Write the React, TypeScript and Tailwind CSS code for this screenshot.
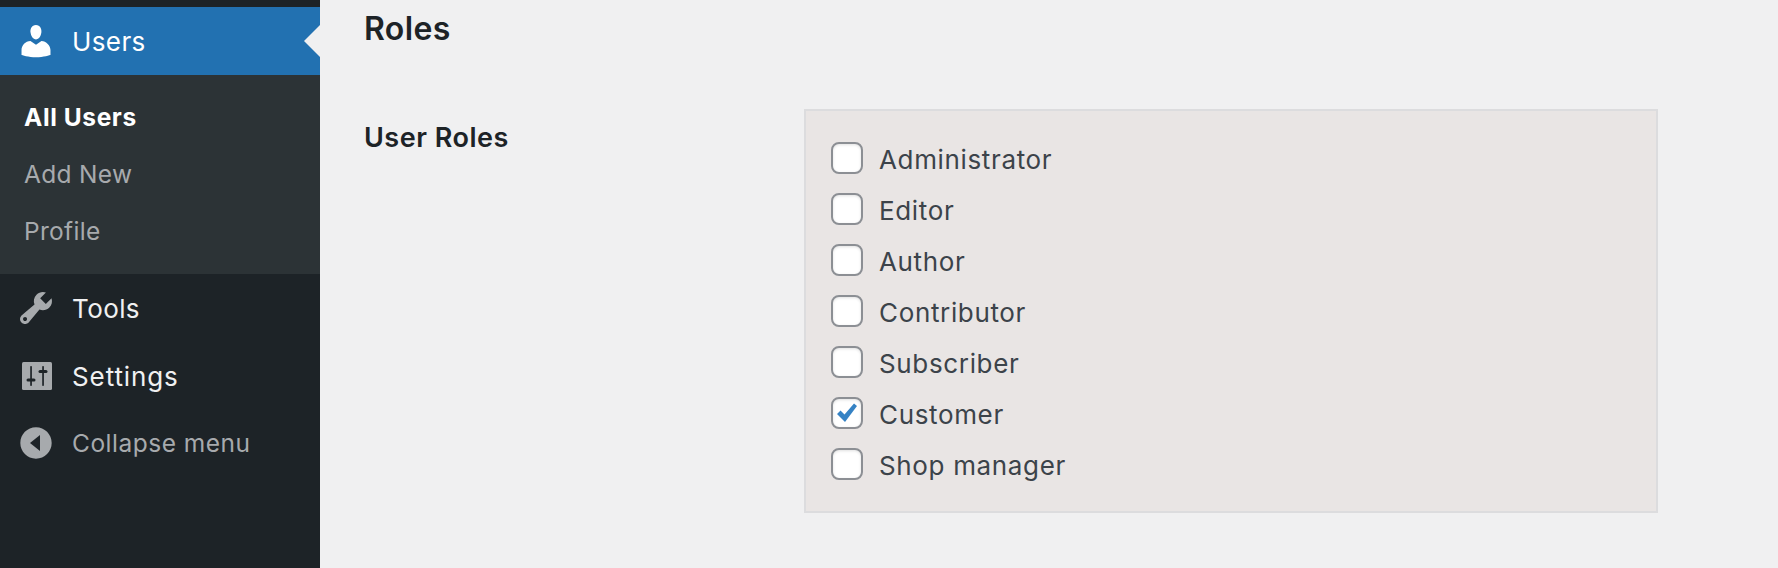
const ROLES = ["Administrator", "Editor", "Author", "Contributor", "Subscriber", "Customer", "Shop manager"];

function UsersIcon() {
  return (
    <svg viewBox="0 0 20 20" fill="currentColor" className="w-10 h-10 shrink-0">
      <path d="M10 9.25c-2.27 0-2.73-3.44-2.73-3.44C7 4.02 7.82 2 9.97 2c2.16 0 2.98 2.02 2.71 3.81 0 0-.41 3.44-2.68 3.44zm0 2.57L12.72 10c2.39 0 4.52 2.33 4.52 4.53v2.49s-3.65 1.13-7.24 1.13c-3.65 0-7.24-1.13-7.24-1.13v-2.49c0-2.25 1.94-4.48 4.47-4.48z" />
    </svg>
  );
}

function ToolsIcon() {
  return (
    <svg viewBox="0 0 20 20" fill="currentColor" className="w-10 h-10 shrink-0">
      <path d="M16.68 9.77c-1.34 1.34-3.3 1.67-4.95.99l-5.41 6.52c-.99.99-2.59.99-3.58 0s-.99-2.59 0-3.57l6.52-5.42c-.68-1.65-.35-3.61.99-4.95 1.28-1.28 3.12-1.62 4.72-1.06l-2.89 2.89 2.82 2.82 2.86-2.87c.53 1.58.18 3.39-1.08 4.65zM3.81 16.21c.4.39 1.04.39 1.43 0 .4-.4.4-1.04 0-1.43-.39-.4-1.03-.4-1.43 0-.39.39-.39 1.03 0 1.43z" />
    </svg>
  );
}

function SettingsIcon() {
  return (
    <svg viewBox="0 0 40 40" className="w-10 h-10 shrink-0">
      <rect x="6" y="6" width="30" height="28" rx="1.5" fill="#a7aaad" />
      <rect x="14.2" y="10" width="1.7" height="20" rx="0.8" fill="#1d2327" />
      <rect x="10.5" y="22.5" width="9" height="3" rx="1.5" fill="#1d2327" />
      <rect x="26.2" y="10" width="1.7" height="20" rx="0.8" fill="#1d2327" />
      <rect x="22.5" y="14" width="9" height="3" rx="1.5" fill="#1d2327" />
    </svg>
  );
}

function CollapseIcon() {
  return (
    <svg viewBox="0 0 20 20" fill="currentColor" className="w-10 h-10 shrink-0">
      <path fillRule="evenodd" d="M10 2.16c4.33 0 7.84 3.51 7.84 7.84s-3.51 7.84-7.84 7.84S2.16 14.33 2.16 10 5.67 2.16 10 2.16zM12 6v8l-5-4z" />
    </svg>
  );
}

function Sidebar() {
  return (
    <aside className="w-[320px] shrink-0 bg-[#1d2327] flex flex-col pt-[7px]">
      {/* Current menu item */}
      <div className="relative h-[68px] bg-[#2271b1] flex items-center pl-4 gap-4 text-white">
        <UsersIcon />
        <span className="text-[26px] tracking-[0.4px] leading-none pt-px">Users</span>
        <div className="absolute right-0 top-[18px] w-0 h-0 border-y-[16px] border-r-[16px] border-y-transparent border-r-[#f0f0f1]" />
      </div>

      {/* Submenu */}
      <div className="h-[199px] bg-[#2c3336] flex flex-col pt-[14px] pl-[24px] text-[24.5px] tracking-[0.3px]">
        <div className="h-[57px] flex items-center font-bold tracking-[0.6px] text-white">All Users</div>
        <div className="h-[56px] flex items-center text-[#a7aaad]">Add New</div>
        <div className="h-[57px] flex items-center text-[#a7aaad] pt-px">Profile</div>
      </div>

      <div className="h-[68px] flex items-center pl-4 gap-4 text-[#a7aaad]">
        <ToolsIcon />
        <span className="text-[26px] tracking-[0.4px] leading-none pt-px text-[#f0f0f1]">Tools</span>
      </div>
      <div className="h-[68px] flex items-center pl-4 gap-4 text-[#a7aaad]">
        <SettingsIcon />
        <span className="text-[26px] tracking-[0.9px] leading-none pt-px text-[#f0f0f1]">Settings</span>
      </div>
      <div className="h-[66px] flex items-center pl-4 gap-4 text-[#a7aaad]">
        <CollapseIcon />
        <span className="text-[24.5px] tracking-[0.5px] leading-none">Collapse menu</span>
      </div>
    </aside>
  );
}

function RoleRow({ label, checked }: { label: string; checked?: boolean }) {
  return (
    <label className="h-[51px] flex items-center gap-4">
      <span className="w-[32px] h-[32px] shrink-0 -mt-0.5 rounded-[8px] border-2 border-[#8c8f94] bg-white shadow-[inset_0_1px_3px_rgba(0,0,0,0.12)] flex items-center justify-center">
        {checked && (
          <svg viewBox="0 0 24 24" className="w-[24px] h-[24px]">
            <path d="M2 13l3.5-3.5L9.5 13.5 19 2.500l3 2.500L10 21z" fill="#3582c4" />
          </svg>
        )}
      </span>
      <span className="text-[26px] tracking-[0.65px] leading-none text-[#3c434a] pt-[3px]">{label}</span>
    </label>
  );
}

export default function App() {
  return (
    <div className="w-[1778px] h-[568px] overflow-hidden flex bg-[#f0f0f1] font-['Inter',sans-serif]">
      <Sidebar />
      <main className="flex-1 pl-[44px] pr-[120px] flex flex-col">
        <h2 className="text-[32px] tracking-[0.4px] leading-none font-semibold text-[#1d2327] mt-[13px]">Roles</h2>
        <div className="flex mt-[64px]">
          <div className="w-[440px] shrink-0 pt-[14px] text-[27px] tracking-[0.5px] leading-[30px] font-semibold text-[#1d2327]">User Roles</div>
          <div className="w-[854px] h-[404px] border-2 border-[#dcdcde] bg-[#e9e5e4] pt-[22px] pl-[25px]">
            {ROLES.map((role) => (
              <RoleRow key={role} label={role} checked={role === "Customer"} />
            ))}
          </div>
        </div>
      </main>
    </div>
  );
}
